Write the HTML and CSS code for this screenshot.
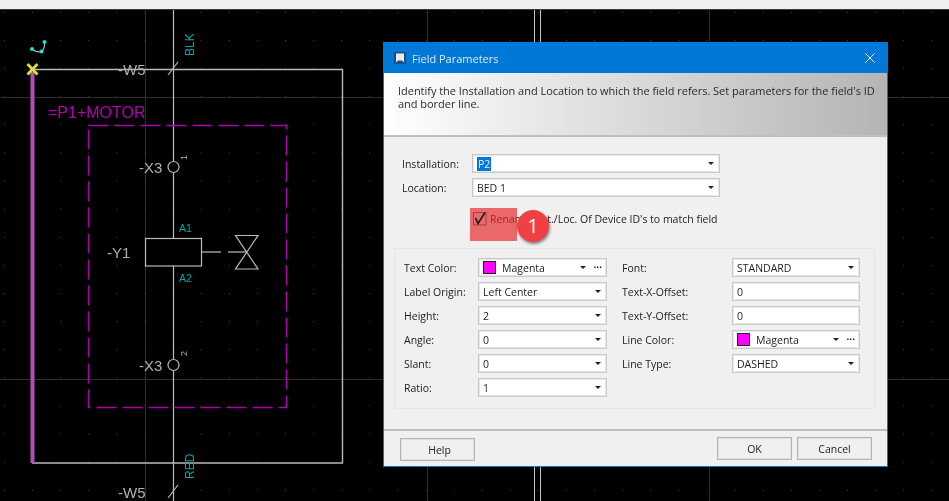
FILE: index.html
```html
<!DOCTYPE html>
<html lang="en">
<head>
<meta charset="utf-8">
<title>Field Parameters</title>
<link rel="stylesheet" href="styles.css">
</head>
<body>
<div class="app">
  <div class="topstrip"></div>
  <div class="stage">
    <svg class="cad" width="949" height="491" viewBox="0 10 949 491" xmlns="http://www.w3.org/2000/svg">
      <defs>
        <pattern id="grid" x="4" y="12" width="28.1" height="28.1" patternUnits="userSpaceOnUse">
          <rect x="0" y="0" width="1" height="1" fill="#4a4a4a"/>
        </pattern>
      </defs>
      <rect x="0" y="10" width="949" height="491" fill="#000"/>
      <rect x="0" y="10" width="949" height="491" fill="url(#grid)"/>
      <g class="guides">
        <line x1="145.5" y1="10" x2="145.5" y2="501"/>
        <line x1="0" y1="97.5" x2="949" y2="97.5"/>
        <line x1="0" y1="379.5" x2="949" y2="379.5"/>
        <line x1="427.5" y1="10" x2="427.5" y2="501"/>
        <line x1="709.5" y1="10" x2="709.5" y2="501"/>
      </g>
      <g class="bright">
        <line x1="534.5" y1="10" x2="534.5" y2="501"/>
        <line x1="540.5" y1="10" x2="540.5" y2="501"/>
      </g>
      <path class="frame" d="M32 69.5H342.5V463H32"/>
      <line class="thick" x1="32.5" y1="72" x2="32.5" y2="463"/>
      <g class="wire">
        <line x1="173.5" y1="10" x2="173.5" y2="161"/>
        <line x1="173.5" y1="173" x2="173.5" y2="238"/>
        <line x1="173.5" y1="266" x2="173.5" y2="359"/>
        <line x1="173.5" y1="371" x2="173.5" y2="501"/>
        <line x1="168" y1="75" x2="178" y2="62"/>
        <line x1="168" y1="498" x2="178" y2="485"/>
        <circle cx="173.5" cy="167" r="5.5"/>
        <circle cx="173.5" cy="365" r="5.5"/>
        <rect x="145.5" y="238.5" width="56" height="27.5"/>
        <line x1="201" y1="252" x2="221" y2="252"/>
        <line x1="228" y1="252" x2="246.5" y2="252"/>
        <path d="M235.5 235.5H258L235.5 269H258Z"/>
      </g>
      <rect class="dash" x="88.5" y="125.5" width="198" height="282"/>
      <g class="mark">
        <line x1="27.5" y1="64" x2="37.5" y2="74.5"/>
        <line x1="37.5" y1="64" x2="27.5" y2="74.5"/>
      </g>
      <path class="hook" d="M32 49Q37 53 41.5 51.5Q45 49 44.5 42"/>
      <g class="hookdot">
        <circle cx="32" cy="49" r="2"/>
        <circle cx="41.5" cy="51.5" r="2"/>
        <circle cx="44.5" cy="42" r="2"/>
      </g>
      <text class="label" x="118" y="75">-W5</text>
      <text class="label" x="118" y="498">-W5</text>
      <text class="label" x="139" y="173">-X3</text>
      <text class="label" x="139" y="371">-X3</text>
      <text class="label" x="107" y="258">-Y1</text>
      <text class="motor" x="48" y="118">=P1+MOTOR</text>
      <text class="teal" x="179" y="232">A1</text>
      <text class="teal" x="179" y="282">A2</text>
      <text class="tealv" transform="translate(194 56) rotate(-90)">BLK</text>
      <text class="tealv" transform="translate(194 479) rotate(-90)">RED</text>
      <text class="pin" transform="translate(187 160) rotate(-90)">1</text>
      <text class="pin" transform="translate(187 356) rotate(-90)">2</text>
    </svg>

    <section class="dialog">
      <header class="titlebar">
        <svg class="appicon" width="12" height="12" viewBox="0 0 12 12" xmlns="http://www.w3.org/2000/svg">
          <rect width="12" height="12" fill="#1a4f86"/>
          <path d="M2 1.5H10V10.5L8 8.5H4L2 10.5Z" fill="#e8eef4"/>
        </svg>
        <h1 class="title">Field Parameters</h1>
        <svg class="closeicon" width="10" height="10" viewBox="0 0 10 10" xmlns="http://www.w3.org/2000/svg">
          <path d="M.5.5L9.5 9.5M9.5.5L.5 9.5" stroke="#fff" stroke-width="1" fill="none"/>
        </svg>
      </header>
      <div class="intro">Identify the Installation and Location to which the field refers. Set parameters for the field's ID and border line.</div>
      <div class="body">
        <div class="toprow">
          <span class="lbl">Installation:</span>
          <div class="combo wide"><span class="val"><span class="sel">P2</span></span><i class="caret"></i></div>
        </div>
        <div class="toprow">
          <span class="lbl">Location:</span>
          <div class="combo wide"><span class="val">BED 1</span><i class="caret"></i></div>
        </div>
        <div class="checkrow">
          <svg class="check" width="14" height="14" viewBox="0 0 14 14" xmlns="http://www.w3.org/2000/svg">
            <rect x=".5" y=".5" width="12.5" height="12.5" fill="none" stroke="#8c4a4a"/>
            <path d="M2.5 6L5 11.5L12 .5" fill="none" stroke="#1a1a1a" stroke-width="1.6"/>
          </svg>
          <span class="checktext">Rename Inst./Loc. Of Device ID's to match field</span>
        </div>
        <div class="group">
          <div class="col">
            <div class="row"><span class="lbl2">Text Color:</span>
              <div class="combo"><span class="swatch"></span><span class="val">Magenta</span><i class="caret near"></i><span class="more">•••</span></div></div>
            <div class="row"><span class="lbl2">Label Origin:</span><div class="combo"><span class="val">Left Center</span><i class="caret"></i></div></div>
            <div class="row"><span class="lbl2">Height:</span><div class="combo"><span class="val">2</span><i class="caret"></i></div></div>
            <div class="row"><span class="lbl2">Angle:</span><div class="combo"><span class="val">0</span><i class="caret"></i></div></div>
            <div class="row"><span class="lbl2">Slant:</span><div class="combo"><span class="val">0</span><i class="caret"></i></div></div>
            <div class="row"><span class="lbl2">Ratio:</span><div class="combo"><span class="val">1</span><i class="caret"></i></div></div>
          </div>
          <div class="col">
            <div class="row"><span class="lbl3">Font:</span><div class="combo"><span class="val">STANDARD</span><i class="caret"></i></div></div>
            <div class="row"><span class="lbl3">Text-X-Offset:</span><div class="combo"><span class="val">0</span></div></div>
            <div class="row"><span class="lbl3">Text-Y-Offset:</span><div class="combo"><span class="val">0</span></div></div>
            <div class="row"><span class="lbl3">Line Color:</span>
              <div class="combo"><span class="swatch"></span><span class="val">Magenta</span><i class="caret near"></i><span class="more">•••</span></div></div>
            <div class="row"><span class="lbl3">Line Type:</span><div class="combo"><span class="val">DASHED</span><i class="caret"></i></div></div>
          </div>
        </div>
      </div>
      <footer class="footer">
        <button class="btn help" type="button">Help</button>
        <div class="actions">
          <button class="btn" type="button">OK</button>
          <button class="btn" type="button">Cancel</button>
        </div>
      </footer>
      <div class="highlight"></div>
      <div class="badge">1</div>
    </section>
  </div>
</div>
</body>
</html>
```
FILE: styles.css
```css
* { box-sizing: border-box; }
html, body { margin: 0; padding: 0; background: #000; }
body { width: 949px; height: 501px; overflow: hidden; font-family: "Open Sans", "Liberation Sans", sans-serif; }
.app { width: 949px; height: 501px; display: flex; flex-direction: column; }
.topstrip { height: 9px; background: #f0f0f0; flex: none; }
.stage { position: relative; flex: 1; border-top: 1px solid #3a3a3a; background: #000; }
.cad { display: block; position: absolute; left: 0; top: 0; filter: blur(.35px); }
.guides line { stroke: #2e2e2e; stroke-width: 1; }
.bright line { stroke: #c4c4c4; stroke-width: 1; }
.frame { fill: none; stroke: #b9b9b9; stroke-width: 1.4; }
.thick { stroke: #b050b4; stroke-width: 4; }
.wire line, .wire circle, .wire rect, .wire path { fill: none; stroke: #bcbcbc; stroke-width: 1.2; }
.dash { fill: none; stroke: #b000b0; stroke-width: 1.4; stroke-dasharray: 20 6; }
.mark line { stroke: #e0dc40; stroke-width: 2.8; }
.hook { fill: none; stroke: #bbb; stroke-width: 1.2; }
.hookdot circle { fill: #19e0e0; }
.label { fill: #b0b0b0; font: 15px "Liberation Sans", sans-serif; }
.motor { fill: #b400b4; font: 16px "Liberation Sans", sans-serif; }
.teal { fill: #00a8a8; font: 10.5px "Liberation Sans", sans-serif; }
.tealv { fill: #00a8a8; font: 12px "Liberation Sans", sans-serif; }
.pin { fill: #b4b4b4; font: 9px "Liberation Sans", sans-serif; }

.dialog { position: absolute; left: 383px; top: 32px; width: 505px; height: 425px; display: flex; flex-direction: column; background: #f0f0f0; border: 1px solid #0078d7; color: #1c1c1c; font-size: 10.5px; filter: blur(.3px); }
.titlebar { flex: none; height: 30px; display: flex; align-items: center; background: #0078d7; padding: 0 12px 0 10px; }
.appicon { flex: none; }
.title { flex: 1; margin: 0 0 0 6px; font-size: 11px; font-weight: 400; color: #dcebf8; }
.closeicon { flex: none; }
.intro { flex: none; height: 64px; padding: 11px 10px 0 14px; font-size: 11px; letter-spacing: -.03px; line-height: 13px; background: linear-gradient(90deg, #fff 0%, #b4b4b4 100%); border-bottom: 2px solid #c0c0c0; color: #2a2a2a; }
.body { flex: 1; padding: 17px 12px 0 10px; }
.toprow { display: flex; align-items: center; height: 19px; margin-bottom: 5px; padding-left: 8px; }
.lbl { width: 70px; flex: none; }
.combo { position: relative; width: 129px; height: 19px; flex: none; display: flex; align-items: center; background: #fff; border: 1px solid #c8c8cc; box-shadow: inset 0 0 0 1px #e8e8ea; padding: 0 4px; }
.combo.wide { width: 248px; }
.col + .col .combo { width: 128px; }
.val { flex: 1; white-space: nowrap; }
.sel { background: #0078d7; color: #e8f2fb; padding: 0 1px; }
.caret { flex: none; width: 0; height: 0; margin-right: 1px; border-left: 3px solid transparent; border-right: 3px solid transparent; border-top: 3px solid #222; }
.caret.near { margin-right: 8px; }
.more { flex: none; font-size: 7.5px; letter-spacing: 0; color: #222; line-height: 1; }
.swatch { flex: none; width: 13px; height: 13px; margin-right: 6px; background: #ff00ff; border: 1px solid #222; }
.checkrow { display: flex; align-items: center; height: 16px; margin: 14px 0 0 79px; }
.check { flex: none; position: relative; z-index: 1; }
.checktext { margin-left: 3px; white-space: nowrap; }
.group { display: flex; gap: 15px; width: 481px; height: 161px; margin: 21px 0 0 0; padding: 9px 0 0 9px; border: 1px solid #e6e6e6; }
.col { display: flex; flex-direction: column; gap: 5px; }
.row { display: flex; align-items: center; height: 19px; }
.lbl2 { width: 74px; flex: none; }
.lbl3 { width: 110px; flex: none; }
.footer { flex: none; height: 37px; display: flex; justify-content: space-between; align-items: flex-start; padding: 6px 15px 0 16px; border-top: 2px solid #bdbdbd; }
.actions { display: flex; gap: 5px; }
.btn { width: 75px; height: 23px; padding: 0; font: inherit; color: #222; background: #f0f0f0; border: 1px solid #b4b4b4; box-shadow: inset 0 0 0 1px #e0e0e0; }
.help { margin-top: 1px; padding-left: 4px; }
.highlight { position: absolute; left: 86px; top: 165px; width: 47px; height: 33px; background: rgba(232, 40, 40, .68); }
.badge { position: absolute; left: 133px; top: 167px; width: 32px; height: 32px; border-radius: 50%; z-index: 2; background: #f04044; color: #fff; font-size: 20px; line-height: 31px; text-align: center; box-shadow: 1px 2px 3px rgba(0, 0, 0, .45); }
```
